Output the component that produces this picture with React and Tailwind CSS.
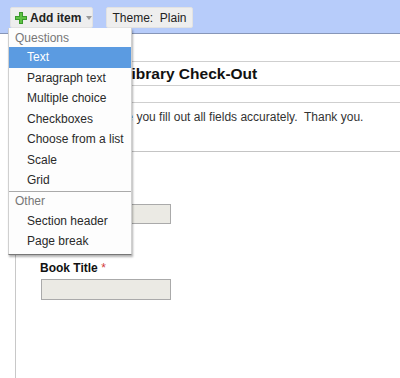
import React from "react";

function Plus() {
  return (
    <svg width="12" height="12" viewBox="0 0 12 12" className="shrink-0">
      <path d="M4 0h4v4h4v4H8v4H4V8H0V4h4z" fill="#3a9a2c" />
      <path d="M5 1h2v4h4v2H7v4H5V7H1V5h4z" fill="#5fc245" />
    </svg>
  );
}

export default function App() {
  const questions = [
    "Text",
    "Paragraph text",
    "Multiple choice",
    "Checkboxes",
    "Choose from a list",
    "Scale",
    "Grid",
  ];
  const others = ["Section header", "Page break"];
  return (
    <div
      className="relative w-[400px] h-[378px] overflow-hidden bg-white text-[12px] text-[#222] whitespace-nowrap"
      style={{ fontFamily: '"Liberation Sans", Arial, sans-serif' }}
    >
      {/* top bar */}
      <div className="h-[34px] bg-[#b7ccfa] border-b border-[#8796b8] flex items-start pt-[7px] pl-[10px] gap-[13px]">
        <div className="h-[21px] w-[83px] flex items-center pl-[4px] gap-[3px] bg-[#eeeeee] border border-[#e2e2e2] rounded-[2px]">
          <Plus />
          <span className="font-bold text-[#222]">Add item</span>
          <span className="ml-[2px] mt-[1px] w-0 h-0 border-l-[3px] border-r-[3px] border-t-[4px] border-l-transparent border-r-transparent border-t-[#999]" />
        </div>
        <div className="h-[21px] w-[87px] flex items-center justify-center bg-[#eeeeee] border border-[#e2e2e2] rounded-[2px] whitespace-pre">
          Theme:  Plain
        </div>
      </div>

      {/* form content */}
      <div className="ml-[15px] border-l border-[#c8c8c8] h-[344px]">
        <div className="h-[27px]" />
        <div className="border-t border-[#cfcfcf] h-[24px] flex items-center pl-[106px]">
          <span className="font-bold text-[15.5px] text-[#111]">Library Check-Out</span>
        </div>
        <div className="border-t border-[#cfcfcf] h-[17px]" />
        <div className="border-t border-[#cfcfcf] h-[49px] pt-[5px] pl-[21px] whitespace-pre text-[#333]">
          Please make sure you fill out all fields accurately.  Thank you.
        </div>
        <div className="border-t border-[#c4c4c4] pl-[24px]">
          <div className="h-[52px]" />
          <div className="ml-[1px] w-[130px] h-[20px] bg-[#ebeae4] border border-[#aaa]" />
          <div className="h-[37px]" />
          <div className="font-bold text-[#111] leading-[15px]">
            Book Title <span className="text-[#d23c3c] font-normal">*</span>
          </div>
          <div className="mt-[3px] ml-[1px] w-[130px] h-[21px] bg-[#ebeae4] border border-[#aaa]" />
        </div>
      </div>

      {/* dropdown menu */}
      <div className="absolute left-[8px] top-[28px] w-[124px] bg-[#fdfdfd] border-l border-r border-[#d0d0d0] border-b border-b-[#777] shadow-[1px_2px_2px_rgba(0,0,0,0.3)] pb-[3px]">
        <div className="h-[19px] flex items-center pl-[6px] text-[#777]">Questions</div>
        {questions.map((q, i) => (
          <div
            key={q}
            className={
              "h-[20.5px] flex items-center pl-[18px] " +
              (i === 0 ? "bg-[#5b9be1] text-white" : "text-[#2a2a2a]")
            }
          >
            {q}
          </div>
        ))}
        <div className="border-t border-[#aaa] h-[20px] flex items-center pl-[6px] text-[#777]">Other</div>
        {others.map((q) => (
          <div key={q} className="h-[20px] flex items-center pl-[18px] text-[#2a2a2a]">
            {q}
          </div>
        ))}
      </div>
    </div>
  );
}
